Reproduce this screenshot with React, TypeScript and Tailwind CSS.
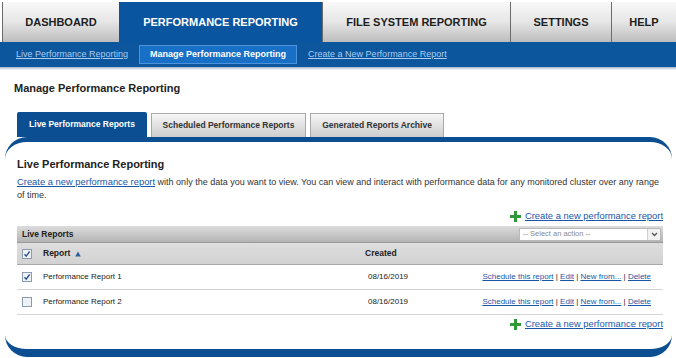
const font = { fontFamily: '"Liberation Sans", Arial, sans-serif' };

const topTabs = [
  { label: "DASHBOARD", width: "w-[117px]", active: false },
  { label: "PERFORMANCE REPORTING", width: "w-[203px]", active: true },
  { label: "FILE SYSTEM REPORTING", width: "w-[188px]", active: false },
  { label: "SETTINGS", width: "w-[101px]", active: false },
  { label: "HELP", width: "flex-1", active: false },
];

const reports = [
  { name: "Performance Report 1", created: "08/16/2019", checked: true },
  { name: "Performance Report 2", created: "08/16/2019", checked: false },
];

function Plus() {
  return (
    <svg width="11" height="11" viewBox="0 0 11 11" className="shrink-0">
      <path d="M4 0h3v4h4v3H7v4H4V7H0V4h4z" fill="#2f9a36" />
    </svg>
  );
}

function CreateLink() {
  return (
    <div className="flex items-center justify-end gap-[4px]">
      <Plus />
      <a href="#" className="text-[9.4px] leading-[12px] text-[#1a56a8] underline">
        Create a new performance report
      </a>
    </div>
  );
}

function Checkbox({ checked }: { checked: boolean }) {
  return (
    <span className="flex h-[10px] w-[10px] items-center justify-center border border-[#8a9bb0] bg-[#eef2f7]">
      {checked && (
        <svg width="8" height="8" viewBox="0 0 8 8">
          <path d="M1.5 4.2l1.7 1.9L6.6 1.5" fill="none" stroke="#2c4f86" strokeWidth="1.3" />
        </svg>
      )}
    </span>
  );
}

export default function App() {
  return (
    <div className="h-[358px] w-[676px] overflow-hidden bg-white text-[#222]" style={font}>
      <nav className="flex h-[42px] pt-[2px] pl-[2px]">
        {topTabs.map((tab) =>
          tab.active ? (
            <div
              key={tab.label}
              className={`${tab.width} flex items-center justify-center bg-[#0a559f] text-[11px] font-bold text-white`}
            >
              {tab.label}
            </div>
          ) : (
            <div
              key={tab.label}
              className={`${tab.width} flex items-center justify-center border-l border-[#6b6b6b] bg-gradient-to-b from-[#f8f8f8] via-[#e6e6e6] to-[#bdbdbd] text-[11px] font-bold text-[#1e1e1e]`}
            >
              {tab.label}
            </div>
          )
        )}
      </nav>

      <div className="flex h-[25px] items-center bg-[#0b569d] pl-[16px] text-[9px]">
        <a href="#" className="text-[#a8cdf3] underline">
          Live Performance Reporting
        </a>
        <span className="ml-[11px] flex h-[19px] items-center border border-[#4d93dc] bg-[#176fc6] px-[10px] font-bold text-white">
          Manage Performance Reporting
        </span>
        <a href="#" className="ml-[11px] text-[#a8cdf3] underline">
          Create a New Performance Report
        </a>
      </div>
      <div className="h-[3px] bg-gradient-to-b from-[#9fb3c8] to-white" />

      <h1 className="mt-[12px] pl-[14px] text-[11px] font-bold leading-[13px]">
        Manage Performance Reporting
      </h1>

      <div className="mt-[17px] flex h-[25px] items-end gap-[4px] pl-[17px] text-[8.5px] font-bold">
        <div className="flex h-[25px] w-[130px] items-center justify-center rounded-t-[2px] bg-[#0b4f92] text-white">
          Live Performance Reports
        </div>
        <div className="flex h-[24px] w-[155px] items-center justify-center border border-b-0 border-[#a9a9a9] bg-gradient-to-b from-[#f6f6f6] to-[#cdcdcd] text-[#333]">
          Scheduled Performance Reports
        </div>
        <div className="flex h-[24px] w-[134px] items-center justify-center border border-b-0 border-[#a9a9a9] bg-gradient-to-b from-[#f6f6f6] to-[#cdcdcd] text-[#333]">
          Generated Reports Archive
        </div>
      </div>

      <section className="mr-[4px] ml-[5px] rounded-[22px] border-x-0 border-t-[5px] border-b-[8px] border-[#0b4f92] pr-[9px] pl-[12px] pt-[15px]">
        <h2 className="text-[11px] font-bold leading-[14px]">Live Performance Reporting</h2>
        <p className="mt-[4px] text-[9px] leading-[13px] text-[#333]">
          <a href="#" className="text-[9.4px] leading-[13px] text-[#1a56a8] underline">
            Create a new performance report
          </a>
          <span>
            {" "}
            with only the data you want to view. You can view and interact with performance data for any monitored
            cluster over any range of time.
          </span>
        </p>

        <div className="mt-[8px] h-[14px]">
          <CreateLink />
        </div>

        <div className="mt-[2px]">
          <div className="flex h-[17px] items-center justify-between border-b border-[#9a9a9a] bg-gradient-to-b from-[#dcdcdc] to-[#b4b4b4] pl-[5px] pr-[2px]">
            <span className="text-[8.5px] font-bold">Live Reports</span>
            <div className="flex h-[13px] w-[142px] items-center justify-between border border-[#b9b9b9] bg-white pl-[3px]">
              <span className="text-[7.5px] text-[#8a8a8a]">-- Select an action --</span>
              <span className="flex h-full w-[13px] items-center justify-center border-l border-[#cfcfcf] bg-[#f1f1f1]">
                <svg width="7" height="5" viewBox="0 0 7 5">
                  <path d="M1 1l2.5 2.5L6 1" fill="none" stroke="#555" strokeWidth="1.3" />
                </svg>
              </span>
            </div>
          </div>

          <div className="grid h-[22px] grid-cols-[26px_322px_1fr] items-center border-b border-[#a8a8a8] bg-gradient-to-b from-[#dedede] to-[#d2d2d2] text-[8.5px] font-bold">
            <span className="pl-[5px]">
              <Checkbox checked />
            </span>
            <span className="flex items-center gap-[5px]">
              Report
              <svg width="6" height="6" viewBox="0 0 6 6">
                <path d="M3 0.5L5.8 5.5H0.2z" fill="#2d5f9e" />
              </svg>
            </span>
            <span>Created</span>
          </div>

          {reports.map((r) => (
            <div
              key={r.name}
              className="grid h-[25px] grid-cols-[26px_322px_1fr_auto] items-center border-b border-[#d4d4d4] text-[8px] text-[#222]"
            >
              <span className="pl-[5px]">
                <Checkbox checked={r.checked} />
              </span>
              <span>{r.name}</span>
              <span className="pl-[3px]">{r.created}</span>
              <span className="pr-[12px] text-[#1a56a8]">
                <a href="#" className="underline">Schedule this report</a>
                <span className="text-[#222]"> | </span>
                <a href="#" className="underline">Edit</a>
                <span className="text-[#222]"> | </span>
                <a href="#" className="underline">New from...</a>
                <span className="text-[#222]"> | </span>
                <a href="#" className="underline">Delete</a>
              </span>
            </div>
          ))}
        </div>

        <div className="mt-[3px] h-[14px]">
          <CreateLink />
        </div>
        <div className="h-[17px]" />
      </section>
    </div>
  );
}
